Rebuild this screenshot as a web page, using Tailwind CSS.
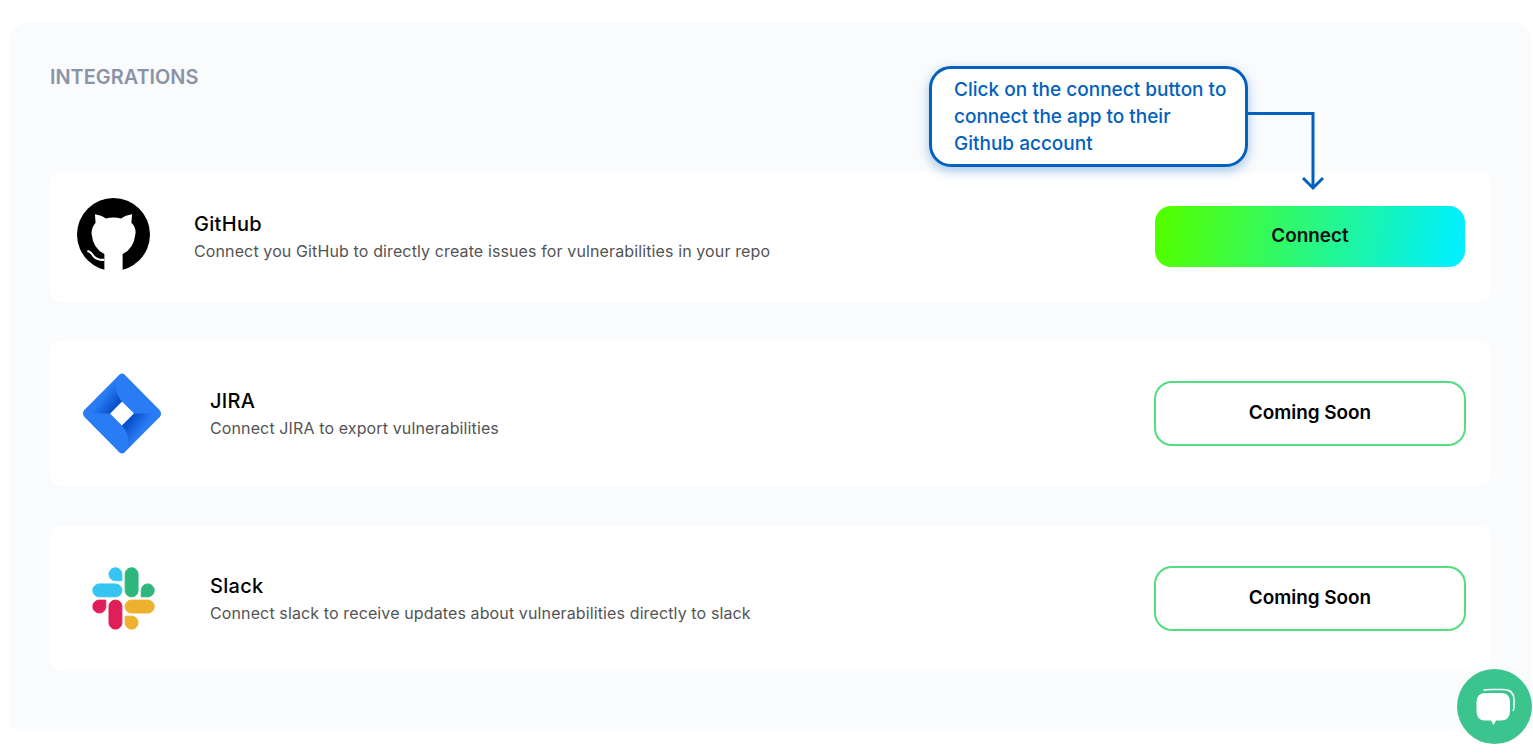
<!DOCTYPE html>
<html lang="en">
<head>
  <meta charset="UTF-8">
  <title>Integrations</title>
  <script src="https://cdn.jsdelivr.net/npm/@tailwindcss/browser@4"></script>
</head>
<body class="bg-white font-['Inter',sans-serif] overflow-hidden h-[756px]">

  <!-- panel -->
  <section class="relative ml-[10px] mt-[22px] w-[1522px] h-[707px] bg-[#fafbfd] rounded-t-[20px] pl-[40px] pr-[41px] pt-[43px]">
    <h2 class="text-[19.9px] leading-[24px] font-semibold text-[#8a94a6]">INTEGRATIONS</h2>

    <div class="mt-[83px] flex flex-col gap-[39.4px]">
      <!-- GitHub -->
      <div class="h-[130px] bg-white rounded-[10px] flex items-center pl-[27px] pr-[26px]">
        <svg class="w-[73px] h-[73px] shrink-0 -mt-[5px]" viewBox="37 24 216 216">
          <circle cx="145" cy="132" r="108" fill="#000"/>
          <path fill="#fff" d="M118 245 L118 190 Q85 175 80 130 Q80 110 92 97 L90 72 Q110 75 122 85 Q145 78 168 85 Q180 75 200 72 L198 97 Q212 110 210 130 Q205 175 172 190 L172 245Z"/>
          <path fill="none" stroke="#fff" stroke-width="6" d="M68 180 Q80 185 85 195 Q95 208 118 207"/>
        </svg>
        <div class="ml-[44px] mt-[2px]">
          <h3 class="text-[20px] leading-[27px] font-medium tracking-[0.3px] text-black">GitHub</h3>
          <p class="text-[16px] leading-[27px] tracking-[0.12px] text-[#545454]">Connect you GitHub to directly create issues for vulnerabilities in your repo</p>
        </div>
        <button class="ml-auto w-[310px] h-[61px] -mt-[2px] rounded-[16px] bg-[linear-gradient(100deg,#52ff00_3%,#00f0ff_97%)] text-[18.9px] font-semibold text-[#111]">Connect</button>
      </div>

      <!-- JIRA -->
      <div class="h-[145px] bg-white rounded-[10px] flex items-center pl-[32px] pr-[25px]">
        <svg class="w-[80px] h-[82px] shrink-0" viewBox="0 0 80 82">
          <defs>
            <linearGradient id="jira-top" gradientUnits="userSpaceOnUse" x1="38" y1="26" x2="26" y2="17"><stop offset="0" stop-color="#0a52cc"/><stop offset="1" stop-color="#2a7cf5"/></linearGradient>
            <linearGradient id="jira-bottom" gradientUnits="userSpaceOnUse" x1="42" y1="56" x2="54" y2="65"><stop offset="0" stop-color="#0a52cc"/><stop offset="1" stop-color="#2a7cf5"/></linearGradient>
          </defs>
          <path fill-rule="evenodd" fill="#2a7cf5" d="M37.5 1.5 Q40 -0.5 42.5 1.5 L78 37.5 Q80 40.5 78 43.5 L42.5 79.5 Q40 81.5 37.5 79.5 L2 43.5 Q0 40.5 2 37.5Z M40 28.5 L28 40.5 L40 52.5 L52 40.5Z"/>
          <path fill="url(#jira-top)" d="M39 1 Q28 14 40 28.5 L28 40.5 L2 40.5 Q1 39 2 37.5Z"/>
          <path fill="url(#jira-bottom)" d="M41 80 Q52 67 40 52.5 L52 40.5 L78 40.5 Q79 42 78 43.5Z"/>
        </svg>
        <div class="ml-[48px] mt-[2px]">
          <h3 class="text-[20px] leading-[27px] font-medium tracking-[0.3px] text-black">JIRA</h3>
          <p class="text-[16px] leading-[27px] tracking-[0.12px] text-[#545454]">Connect JIRA to export vulnerabilities</p>
        </div>
        <button class="ml-auto w-[312px] h-[65px] pb-[2px] rounded-[18px] border-2 border-[#52dd7f] bg-white text-[18.9px] font-semibold text-black">Coming Soon</button>
      </div>

      <!-- Slack -->
      <div class="h-[145px] bg-white rounded-[10px] flex items-center pl-[42px] pr-[25px]">
        <svg class="w-[63px] h-[63px] shrink-0" viewBox="-1 -1 129 129" stroke-width="2">
          <path fill="#E01E5A" stroke="#E01E5A" d="M27.2 80c0 7.3-5.9 13.2-13.2 13.2C6.7 93.2.8 87.3.8 80c0-7.3 5.9-13.2 13.2-13.2h13.2V80zm6.6 0c0-7.3 5.9-13.2 13.2-13.2 7.3 0 13.2 5.9 13.2 13.2v33c0 7.3-5.9 13.2-13.2 13.2-7.3 0-13.2-5.9-13.2-13.2V80z"/>
          <path fill="#36C5F0" stroke="#36C5F0" d="M47 27c-7.3 0-13.2-5.9-13.2-13.2C33.8 6.5 39.7.6 47 .6c7.3 0 13.2 5.9 13.2 13.2V27H47zm0 6.7c7.3 0 13.2 5.9 13.2 13.2 0 7.3-5.9 13.2-13.2 13.2H13.9C6.6 60.1.7 54.2.7 46.9c0-7.3 5.9-13.2 13.2-13.2H47z"/>
          <path fill="#2EB67D" stroke="#2EB67D" d="M99.9 46.9c0-7.3 5.9-13.2 13.2-13.2 7.3 0 13.2 5.9 13.2 13.2 0 7.3-5.9 13.2-13.2 13.2H99.9V46.9zm-6.6 0c0 7.3-5.9 13.2-13.2 13.2-7.3 0-13.2-5.9-13.2-13.2V13.8C66.9 6.5 72.8.6 80.1.6c7.3 0 13.2 5.9 13.2 13.2v33.1z"/>
          <path fill="#ECB22E" stroke="#ECB22E" d="M80.1 99.8c7.3 0 13.2 5.9 13.2 13.2 0 7.3-5.9 13.2-13.2 13.2-7.3 0-13.2-5.9-13.2-13.2V99.8h13.2zm0-6.6c-7.3 0-13.2-5.9-13.2-13.2 0-7.3 5.9-13.2 13.2-13.2h33.1c7.3 0 13.2 5.9 13.2 13.2 0 7.3-5.9 13.2-13.2 13.2H80.1z"/>
        </svg>
        <div class="ml-[55px] mt-[3px]">
          <h3 class="text-[20px] leading-[27px] font-medium tracking-[0.3px] text-black">Slack</h3>
          <p class="text-[16px] leading-[27px] tracking-[0.12px] text-[#545454]">Connect slack to receive updates about vulnerabilities directly to slack</p>
        </div>
        <button class="ml-auto w-[312px] h-[65px] rounded-[18px] border-2 border-[#52dd7f] bg-white text-[18.9px] font-semibold text-black">Coming Soon</button>
      </div>
    </div>

    <!-- callout over the panel -->
    <div class="absolute left-[919px] top-[44px] w-[319px] h-[101px] bg-white border-[3px] border-[#0361bd] rounded-[22px] pl-[22px] pt-[7px] shadow-[0_4px_12px_rgba(3,97,189,0.35)] font-medium text-[#0361bd] text-[19px] leading-[27px]">
      Click on the connect button to<br>connect the app to their<br>Github account
    </div>
    <svg class="absolute left-[1238px] top-[88px] w-[80px] h-[82px]" viewBox="0 0 80 82" fill="none" stroke="#0361bd" stroke-width="3">
      <path d="M0 3.5 H65 V78"/>
      <path d="M55 68 L65 78 L75 68"/>
    </svg>
  </section>

  <!-- chat bubble -->
  <button class="fixed left-[1457px] top-[669px] w-[75px] h-[75px] rounded-full bg-[#3cc48f] flex items-center justify-center">
    <svg class="w-[44px] h-[44px]" viewBox="0 0 44 44">
      <path d="M10.5 5 Q13 4.5 18 4.5 H30 Q41 4.5 41 15 V21 Q41 24 40 26" fill="none" stroke="#fff" stroke-width="1.6"/>
      <path d="M13 8 H28 Q37 8 37 17 V26 Q37 35.5 28 35.5 H23 L20.5 40 L18 35.5 H12 Q3.5 35.5 3.5 26 V17 Q3.5 8 13 8Z" fill="#fff"/>
    </svg>
  </button>
</body>
</html>
